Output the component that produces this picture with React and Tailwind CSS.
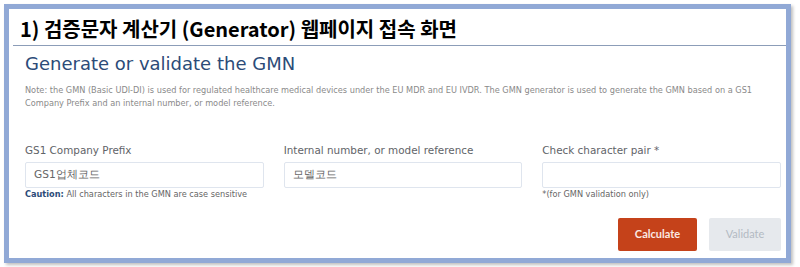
const sans = { fontFamily: '"DejaVu Sans", Verdana, sans-serif' };

function Field({ label, value, help }) {
  return (
    <div className="flex flex-col">
      <label className="h-[16px] text-[10.4px] leading-[16px] text-[#5f6368]">{label}</label>
      <div className="mt-[4px] flex h-[26px] items-center rounded-[2px] border border-[#dfe5ee] bg-white pl-[8px] text-[10.6px] text-[#666]">
        {value}
      </div>
      {help}
    </div>
  );
}

export default function App() {
  return (
    <div className="h-[267px] w-[800px] overflow-hidden bg-white p-[4px]">
      <div
        className="flex h-[259px] w-[787px] flex-col border-[5px] border-[#91a9d6] bg-white shadow-[2px_2px_3px_rgba(0,0,0,0.25)]"
        style={sans}
      >
        <div className="ml-[4px] mt-[7px] h-[30px] border-b border-[#8c9db8] pl-[7px]">
          <h1
            className="text-[20px] font-bold leading-[26px] text-black"
            style={{ fontFamily: '"Noto Sans CJK KR", "Noto Sans", sans-serif' }}
          >
            1) 검증문자 계산기 (Generator) 웹페이지 접속 화면
          </h1>
        </div>

        <div className="flex flex-col pl-[16px] pr-[5px]">
          <h2 className="mt-[6px] text-[18px] leading-[24px] text-[#2c4b78]">Generate or validate the GMN</h2>
          <p className="mt-[8px] text-[8.2px] leading-[13px] text-[#8a8a8a]">
            Note: the GMN (Basic UDI-DI) is used for regulated healthcare medical devices under the EU MDR and EU IVDR. The GMN generator is used to generate the GMN based on a GS1
            <br />
            Company Prefix and an internal number, or model reference.
          </p>

          <div className="mt-[32px] grid grid-cols-3 gap-x-[20px]">
            <Field
              label="GS1 Company Prefix"
              value="GS1업체코드"
              help={
                <p className="mt-[1px] text-[8.2px] leading-[11px] text-[#666]">
                  <span className="font-bold text-[#2c4b78]">Caution:</span> All characters in the GMN are case sensitive
                </p>
              }
            />
            <Field label="Internal number, or model reference" value="모델코드" />
            <Field
              label="Check character pair *"
              value=""
              help={<p className="mt-[1px] text-[8.2px] leading-[11px] text-[#666]">*(for GMN validation only)</p>}
            />
          </div>

          <div className="mt-[18px] flex justify-end gap-[12px]" style={{ fontFamily: 'Lato, "Open Sans", sans-serif' }}>
            <button className="h-[33px] w-[79px] rounded-[2px] bg-[#c5421a] text-[11px] font-bold text-[#fbe9e2]">
              Calculate
            </button>
            <button className="h-[33px] w-[72px] rounded-[2px] bg-[#e6e9ed] text-[11px] text-[#b3bac3]">
              Validate
            </button>
          </div>
        </div>
      </div>
    </div>
  );
}
